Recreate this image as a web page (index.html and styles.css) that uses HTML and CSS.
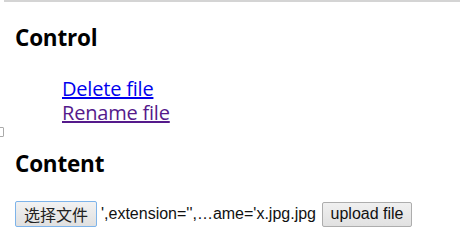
FILE: index.html
```html
<!DOCTYPE html>
<html>
<head>
<meta charset="utf-8">
<link rel="stylesheet" href="styles.css">
</head>
<body>
<div class="rule"></div>
<div class="page">
  <h2 class="title">Control</h2>
  <ul class="links">
    <li><a class="link" href="#">Delete file</a></li>
    <li><a class="link visited" href="#">Rename file</a></li>
  </ul>
  <span class="stray"></span>
  <h2 class="title content-title">Content</h2>
  <form class="upload">
    <span class="file-btn">选择文件</span>
    <span class="file-name">',extension='',…ame='x.jpg.jpg</span>
    <button type="button" class="submit">upload file</button>
  </form>
</div>
</body>
</html>
```
FILE: styles.css
```css
html, body {
  margin: 0;
  padding: 0;
  background: #fff;
}
body {
  position: relative;
  width: 460px;
  height: 251px;
  overflow: hidden;
  font-family: "Open Sans", "Noto Sans", sans-serif;
}
.rule {
  margin-left: 4px;
  height: 2px;
  background: #d4d4d4;
}
.page {
  padding-left: 15px;
}
.title {
  margin: 0;
  padding-top: 21px;
  font-size: 22.5px;
  font-weight: 700;
  line-height: 30px;
  color: #000;
  letter-spacing: -0.2px;
}
.links {
  list-style: none;
  margin: 0;
  padding: 24px 0 0 47px;
}
.links li {
  line-height: 24px;
  height: 24px;
}
.link {
  font-size: 20px;
  color: #0000ee;
  text-decoration: underline;
  letter-spacing: -0.2px;
}
.link.visited {
  color: #551a8b;
}
.stray {
  position: absolute;
  left: -6px;
  top: 127px;
  width: 8px;
  height: 8px;
  border: 1px solid #aaa;
  border-radius: 1px;
}
.content-title {
  padding-top: 24px;
}
.upload {
  display: flex;
  align-items: center;
  margin: 0;
  padding-top: 22px;
}
.file-btn {
  box-sizing: border-box;
  height: 26px;
  width: 82px;
  justify-content: center;
  display: flex;
  align-items: center;
  font-family: "Noto Sans CJK SC", sans-serif;
  font-size: 16px;
  color: #222;
  border: 1px solid #7eb4ea;
  border-radius: 2px;
  background: linear-gradient(#f2f2f2, #e0e0e0);
}
.file-name {
  margin-left: 4px;
  font-family: "Liberation Sans", Arial, sans-serif;
  font-size: 16px;
  color: #111;
}
.submit {
  box-sizing: border-box;
  margin-left: 6px;
  height: 25px;
  width: 90px;
  padding: 0;
  font-family: "Liberation Sans", Arial, sans-serif;
  font-size: 16px;
  color: #111;
  border: 1px solid #adadad;
  border-radius: 2px;
  background: linear-gradient(#f0f0f0, #e1e1e1);
}
```
